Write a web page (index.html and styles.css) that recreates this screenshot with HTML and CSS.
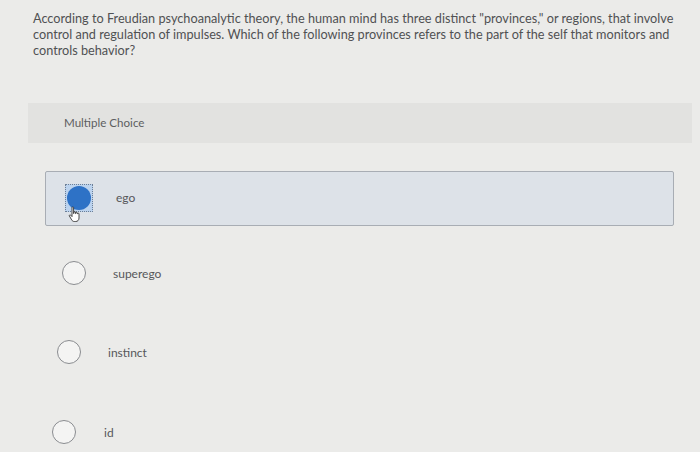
FILE: index.html
```html
<!DOCTYPE html>
<html>
<head>
<meta charset="utf-8">
<link rel="stylesheet" href="styles.css">
</head>
<body>
<div class="page">
  <p class="question">According to Freudian psychoanalytic theory, the human mind has three distinct "provinces," or regions, that involve control and regulation of impulses. Which of the following provinces refers to the part of the self that monitors and controls behavior?</p>
  <div class="card">
    <div class="card-head">Multiple Choice</div>
    <div class="options">
      <div class="option selected">
        <span class="focus"><span class="dot"></span></span>
        <span class="label">ego</span>
        <svg class="cursor" width="14" height="17" viewBox="0 0 14 17">
          <path d="M4 1.5c0-.8 1.6-.8 1.6 0v6l.4-.1V6.2c0-.8 1.5-.8 1.5 0v1.4l.3-.1V6.9c0-.8 1.5-.8 1.5 0v1l.3-.1c0-.8 1.4-.8 1.4 0V12c0 2-1.3 3.5-3.3 3.5H6.3c-1.2 0-2-.6-2.6-1.6L1.4 10c-.5-.8.6-1.6 1.3-.9L4 10.6Z" fill="#fff" stroke="#333" stroke-width="0.9" stroke-linejoin="round"/>
        </svg>
      </div>
      <div class="option o2"><span class="radio"></span><span class="label">superego</span></div>
      <div class="option o3"><span class="radio"></span><span class="label">instinct</span></div>
      <div class="option o4"><span class="radio"></span><span class="label">id</span></div>
    </div>
  </div>
</div>
</body>
</html>
```
FILE: styles.css
```css
html, body {
  margin: 0;
  padding: 0;
}
body {
  background: #ebebe9;
  font-family: Lato, "Open Sans", sans-serif;
  color: #4f5052;
  width: 700px;
  height: 452px;
  overflow: hidden;
}
.page {
  padding: 10px 0 0 0;
}
.question {
  margin: 0;
  padding: 0 10px 0 33px;
  font-size: 12.7px;
  line-height: 16px;
  color: #505153;
}
.card {
  margin: 45px 8px 0 28px;
}
.card-head {
  height: 40px;
  background: #e2e2e0;
  display: flex;
  align-items: center;
  padding-left: 36px;
  padding-bottom: 2px;
  box-sizing: border-box;
  font-size: 11.6px;
  color: #5d5e60;
}
.options {
  padding: 28px 0 0 17px;
  display: flex;
  flex-direction: column;
}
.option {
  position: relative;
  display: flex;
  align-items: center;
  height: 54px;
  margin-right: 18px;
  font-size: 12px;
  color: #56575a;
}
.option.selected {
  background: #dde2e8;
  border: 1px solid #a8adb4;
  border-radius: 2px;
  padding-left: 19px;
  padding-bottom: 2px;
  box-sizing: border-box;
  height: 55px;
}
.option.o2 { padding-left: 17px; margin-top: 20px; }
.option.o3 { padding-left: 12px; margin-top: 25px; }
.option.o4 { padding-left: 7px; margin-top: 26px; }
.focus {
  width: 26px;
  height: 26px;
  border: 1px dotted #6d7f95;
  background: #bcd3ee;
  display: flex;
  align-items: center;
  justify-content: center;
}
.dot {
  width: 24px;
  height: 24px;
  border-radius: 50%;
  background: #2e72c6;
}
.radio {
  width: 24px;
  height: 24px;
  border: 1.5px solid #8a8c90;
  border-radius: 50%;
  box-sizing: border-box;
  background: #f4f4f3;
}
.label {
  margin-left: 23px;
}
.o2 .label { margin-left: 27px; }
.o3 .label { margin-left: 27px; }
.o4 .label { margin-left: 28px; }
.cursor {
  position: absolute;
  left: 22px;
  top: 34px;
}
```
